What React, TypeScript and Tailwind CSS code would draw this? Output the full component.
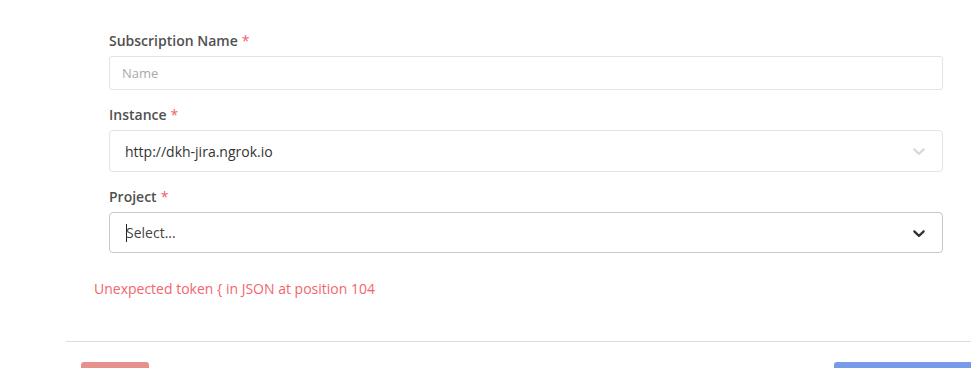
import React from 'react';

const Chevron = ({ className }: { className: string }) => (
  <svg viewBox="0 0 20 20" width="20" height="20" className={className} fill="currentColor">
    <path d="M4.516 7.548c0.436-0.446 1.043-0.481 1.576 0l3.908 3.747 3.908-3.747c0.533-0.481 1.141-0.446 1.574 0 0.436 0.445 0.408 1.197 0 1.615-0.406 0.418-4.695 4.502-4.695 4.502-0.217 0.223-0.502 0.335-0.787 0.335s-0.57-0.112-0.789-0.335c0 0-4.287-4.084-4.695-4.502s-0.436-1.17 0-1.615z" />
  </svg>
);

const Label = ({ text }: { text: string }) => (
  <label className="block h-5 leading-5 text-[14px] font-semibold text-[#505050] mb-[5px]">
    {text}
    <span className="text-[#f45b69] ml-[4px] font-normal">*</span>
  </label>
);

const App: React.FC = () => {
  return (
    <div className="w-[971px] h-[368px] overflow-hidden bg-white" style={{ fontFamily: '"Open Sans", sans-serif' }}>
      <div className="ml-[66px] w-[1000px]">
        {/* Form body */}
        <div className="pt-[31px] pl-[28px]">
          <div className="pl-[15px] w-[849px] space-y-[15px]">
            <div>
              <Label text="Subscription Name" />
              <input
                type="text"
                placeholder="Name"
                className="w-full h-[34px] px-[12px] border border-[#e3e3e3] rounded-[3px] text-[13px] text-[#333] placeholder:text-[#aaa] outline-none"
              />
            </div>

            <div>
              <Label text="Instance" />
              <div className="flex items-center justify-between h-[42px] border border-[#e3e3e3] rounded-[4px] pl-[16px] pr-[13px]">
                <span className="text-[14px] text-[#333] ml-[-1px]">http://dkh-jira.ngrok.io</span>
                <Chevron className="text-[#d9d9d9]" />
              </div>
            </div>

            <div>
              <Label text="Project" />
              <div className="flex items-center justify-between h-[41px] border border-[#c9c9c9] rounded-[4px] pl-[16px] pr-[13px]">
                <div className="flex items-center">
                  <span className="w-px h-[18px] bg-[#222] mr-[-1px]" />
                  <span className="text-[14px] text-[#444]">Select...</span>
                </div>
                <Chevron className="text-[#333]" />
              </div>
            </div>
          </div>

          <p className="mt-[26px] h-5 leading-5 text-[14px] text-[#f4646e]">Unexpected token {'{'} in JSON at position 104</p>
        </div>

        {/* Footer */}
        <div className="mt-[42px] border-t border-[#dcdcdc] pt-[20px] pl-[15px] flex">
          <button className="w-[68px] h-[36px] rounded-[3px] bg-[#e6918e]" />
          <button className="ml-[685px] w-[160px] h-[36px] rounded-[3px] bg-[#789be9]" />
        </div>
      </div>
    </div>
  );
};

export default App;
